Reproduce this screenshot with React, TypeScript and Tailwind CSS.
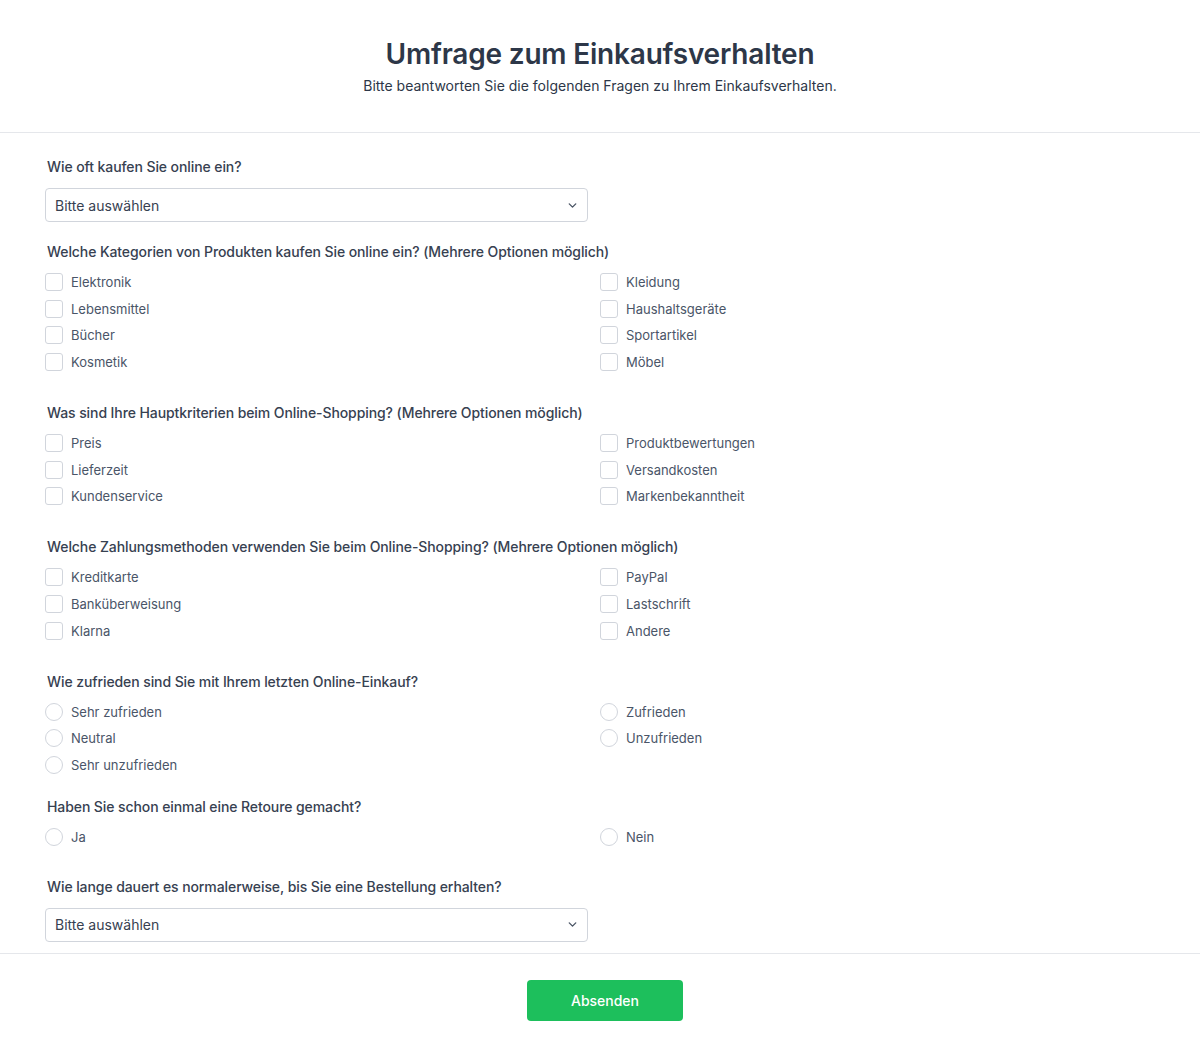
import React from "react";
import { ChevronDown } from "lucide-react";

const font = { fontFamily: "Inter, 'Noto Sans', sans-serif" };

function Select() {
  return (
    <div className="flex h-[34px] w-[543px] items-center justify-between rounded-[4px] border border-gray-300 bg-white pl-[9px] pr-[8px] text-[14px] text-[#374151]">
      <span>Bitte auswählen</span>
      <ChevronDown size={13} strokeWidth={2.5} className="text-gray-600" />
    </div>
  );
}

function Label({ children, mb = "mb-[10px]" }: { children: React.ReactNode; mb?: string }) {
  return (
    <div className={`${mb} h-5 text-[14px] font-medium leading-5 tracking-[-0.09px] text-[#374151]`}>{children}</div>
  );
}

function Options({ items, type }: { items: string[][]; type: "checkbox" | "radio" }) {
  const flat: string[] = [];
  items.forEach((r) => r.forEach((x) => flat.push(x)));
  return (
    <div className="grid grid-cols-[555px_1fr] gap-y-[6.67px]">
      {flat.map((t, i) => (
        <div key={i} className={`flex h-5 items-center gap-2 ${t === "" ? "invisible" : ""}`}>
          <span
            className={`h-[18px] w-[18px] shrink-0 border border-gray-300 bg-white ${
              type === "radio" ? "rounded-full" : "rounded-[3px]"
            }`}
          />
          <span className="text-[13px] leading-5 text-[#4a5568]">{t}</span>
        </div>
      ))}
    </div>
  );
}

export default function App() {
  return (
    <div className="flex min-h-[1056px] flex-col bg-white" style={font}>
      <header className="border-b border-gray-200 py-9 text-center">
        <h1 className="text-[28px] font-semibold leading-9 tracking-[-0.2px] text-[#2d3748]">
          Umfrage zum Einkaufsverhalten
        </h1>
        <p className="mt-1 text-[14px] leading-5 text-[#2d3748]">
          Bitte beantworten Sie die folgenden Fragen zu Ihrem Einkaufsverhalten.
        </p>
      </header>

      <main className="px-[45px] pt-6 pb-[11px]">
        <div className="pl-[2px]">
          <Label mb="mb-[11px]">Wie oft kaufen Sie online ein?</Label>
        </div>
        <Select />

        <div className="mt-5 pl-[2px]">
          <Label>Welche Kategorien von Produkten kaufen Sie online ein? (Mehrere Optionen möglich)</Label>
        </div>
        <Options
          type="checkbox"
          items={[
            ["Elektronik", "Kleidung"],
            ["Lebensmittel", "Haushaltsgeräte"],
            ["Bücher", "Sportartikel"],
            ["Kosmetik", "Möbel"],
          ]}
        />

        <div className="mt-[31px] pl-[2px]">
          <Label>Was sind Ihre Hauptkriterien beim Online-Shopping? (Mehrere Optionen möglich)</Label>
        </div>
        <Options
          type="checkbox"
          items={[
            ["Preis", "Produktbewertungen"],
            ["Lieferzeit", "Versandkosten"],
            ["Kundenservice", "Markenbekanntheit"],
          ]}
        />

        <div className="mt-[31px] pl-[2px]">
          <Label>Welche Zahlungsmethoden verwenden Sie beim Online-Shopping? (Mehrere Optionen möglich)</Label>
        </div>
        <Options
          type="checkbox"
          items={[
            ["Kreditkarte", "PayPal"],
            ["Banküberweisung", "Lastschrift"],
            ["Klarna", "Andere"],
          ]}
        />

        <div className="mt-[31px] pl-[2px]">
          <Label>Wie zufrieden sind Sie mit Ihrem letzten Online-Einkauf?</Label>
        </div>
        <Options
          type="radio"
          items={[
            ["Sehr zufrieden", "Zufrieden"],
            ["Neutral", "Unzufrieden"],
            ["Sehr unzufrieden", ""],
          ]}
        />

        <div className="mt-[22px] pl-[2px]">
          <Label>Haben Sie schon einmal eine Retoure gemacht?</Label>
        </div>
        <Options type="radio" items={[["Ja", "Nein"]]} />

        <div className="mt-[30px] pl-[2px]">
          <Label mb="mb-[11px]">Wie lange dauert es normalerweise, bis Sie eine Bestellung erhalten?</Label>
        </div>
        <Select />
      </main>

      <footer className="flex justify-center border-t border-gray-200 pt-[26px] pb-[35px] pl-[10px]">
        <button className="h-[41px] w-[156px] rounded-[4px] bg-[#1dbf5c] text-[14px] font-medium text-white">
          Absenden
        </button>
      </footer>
    </div>
  );
}
